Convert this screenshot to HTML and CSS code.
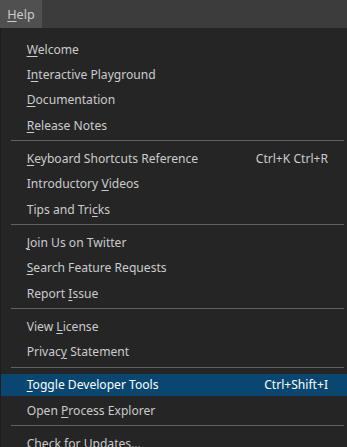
FILE: index.html
```html
<!DOCTYPE html>
<html>
<head>
<meta charset="utf-8">
<link rel="stylesheet" href="styles.css">
</head>
<body>
<div class="menubar">
  <div class="menubar-item active"><span class="mn">H</span>elp</div>
</div>
<div class="menu">
  <ul class="menu-list">
    <li class="item"><span class="label"><span class="mn">W</span>elcome</span></li>
    <li class="item"><span class="label">I<span class="mn">n</span>teractive Playground</span></li>
    <li class="item"><span class="label"><span class="mn">D</span>ocumentation</span></li>
    <li class="item"><span class="label"><span class="mn">R</span>elease Notes</span></li>
    <li class="sep"></li>
    <li class="item"><span class="label"><span class="mn">K</span>eyboard Shortcuts Reference</span><span class="key">Ctrl+K Ctrl+R</span></li>
    <li class="item"><span class="label">Introductory <span class="mn">V</span>ideos</span></li>
    <li class="item"><span class="label">Tips and Tri<span class="mn">c</span>ks</span></li>
    <li class="sep"></li>
    <li class="item"><span class="label"><span class="mn">J</span>oin Us on Twitter</span></li>
    <li class="item"><span class="label"><span class="mn">S</span>earch Feature Requests</span></li>
    <li class="item"><span class="label">Report <span class="mn">I</span>ssue</span></li>
    <li class="sep"></li>
    <li class="item"><span class="label">View <span class="mn">L</span>icense</span></li>
    <li class="item"><span class="label">Privac<span class="mn">y</span> Statement</span></li>
    <li class="sep"></li>
    <li class="item selected"><span class="label"><span class="mn">T</span>oggle Developer Tools</span><span class="key">Ctrl+Shift+I</span></li>
    <li class="item"><span class="label">Open <span class="mn">P</span>rocess Explorer</span></li>
    <li class="sep"></li>
    <li class="item"><span class="label">Check for Updates...</span></li>
  </ul>
</div>
</body>
</html>
```

FILE: styles.css
```css
html, body {
  margin: 0;
  padding: 0;
  width: 347px;
  height: 447px;
  overflow: hidden;
  background: #252526;
  font-family: "Noto Sans", "Open Sans", sans-serif;
  font-size: 12.1px;
  color: #cccccc;
}
.menubar {
  display: flex;
  height: 28px;
  background: #3c3c3c;
}
.menubar-item {
  display: flex;
  align-items: center;
  justify-content: center;
  width: 42px;
  font-size: 12.6px;
}
.menubar-item.active {
  background: #505050;
}
.mn {
  text-decoration: underline;
  text-underline-offset: 2px;
}
.menu {
  background: #252526;
  border-left: 1px solid #1e1e1e;
  padding-top: 8.64px;
}
.menu-list {
  list-style: none;
  margin: 0;
  padding: 0;
  display: flex;
  flex-direction: column;
}
.item {
  display: flex;
  justify-content: space-between;
  align-items: center;
  flex: none;
  height: 22.67px;
  margin: 1.33px 0;
  padding: 0 19px 0 25.7px;
  white-space: nowrap;
}
.item.selected {
  background: #094771;
  color: #ffffff;
}
.sep {
  flex: none;
  height: 0;
  border-bottom: 1px solid #606060;
  margin: 2.3px 3px 4.7px 10px;
}
```
